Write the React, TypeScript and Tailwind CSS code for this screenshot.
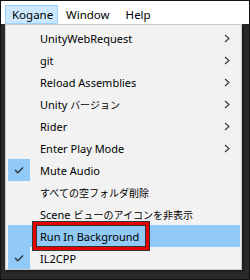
import React from "react";

const font = { fontFamily: '"Segoe UI", "Noto Sans", "Noto Sans CJK JP", sans-serif' };

function Chevron() {
  return (
    <svg width="6" height="9" viewBox="0 0 6 9" className="absolute right-[10px] top-[7px]">
      <polyline points="1,1 5,4.5 1,8" fill="none" stroke="#333" strokeWidth="1.1" />
    </svg>
  );
}

function Check() {
  return (
    <svg width="12" height="10" viewBox="0 0 12 10">
      <polyline points="2,5 4.8,7.8 10,2.5" fill="none" stroke="#333" strokeWidth="1.3" />
    </svg>
  );
}

function J({ children }: { children: React.ReactNode }) {
  return <span className="text-[10px]">{children}</span>;
}

type Item = { key: string; label: React.ReactNode; sub?: boolean; checked?: boolean; hi?: boolean };

const items: Item[] = [
  { key: "a", label: "UnityWebRequest", sub: true },
  { key: "b", label: "git", sub: true },
  { key: "c", label: "Reload Assemblies", sub: true },
  { key: "d", label: <>Unity <J>バージョン</J></>, sub: true },
  { key: "e", label: "Rider", sub: true },
  { key: "f", label: "Enter Play Mode", sub: true },
  { key: "g", label: "Mute Audio", checked: true },
  { key: "h", label: <J>すべての空フォルダ削除</J> },
  { key: "i", label: <>Scene <J>ビューのアイコンを非表示</J></> },
  { key: "j", label: "Run In Background", hi: true },
  { key: "k", label: "IL2CPP", checked: true },
];

export default function App() {
  return (
    <div
      className="w-[250px] h-[280px] relative bg-[#2a2a2a] border border-[#111] overflow-hidden text-[11px] text-black"
      style={font}
    >
      <div className="h-[23px] bg-white flex items-start pt-[4px] pl-[4px] text-[11.5px]">
        <div className="h-[19px] w-[53px] border border-[#99d1ff] bg-[#cce8ff] flex items-center pl-[6px] leading-none">
          Kogane
        </div>
        <div className="h-[19px] flex items-center pl-[8px] leading-none">Window</div>
        <div className="h-[19px] flex items-center pl-[16px] leading-none">Help</div>
      </div>
      <div className="ml-[4px] w-[237px] h-[246px] bg-[#f2f2f2] border border-[#cccccc] pt-[2px] pl-[2px] pr-[1px] shadow-[2px_2px_2px_rgba(0,0,0,0.35)]">
        {items.map((it) => (
          <div
            key={it.key}
            className={`relative h-[22px] flex items-center ${it.hi ? "bg-[#91c9f7]" : ""}`}
          >
            <div
              className={`w-[22px] h-[22px] flex items-center justify-center ${it.checked ? "bg-[#91c9f7]" : ""}`}
            >
              {it.checked ? <Check /> : null}
            </div>
            <span className="pl-[10px] leading-none whitespace-nowrap">{it.label}</span>
            {it.sub ? <Chevron /> : null}
            {it.hi ? (
              <div className="absolute left-[25px] top-[-3px] w-[116px] h-[28px] border-[3px] border-[#e60000] shadow-[0_0_0_1px_#333,inset_0_0_0_1px_#333]" />
            ) : null}
          </div>
        ))}
      </div>
    </div>
  );
}
